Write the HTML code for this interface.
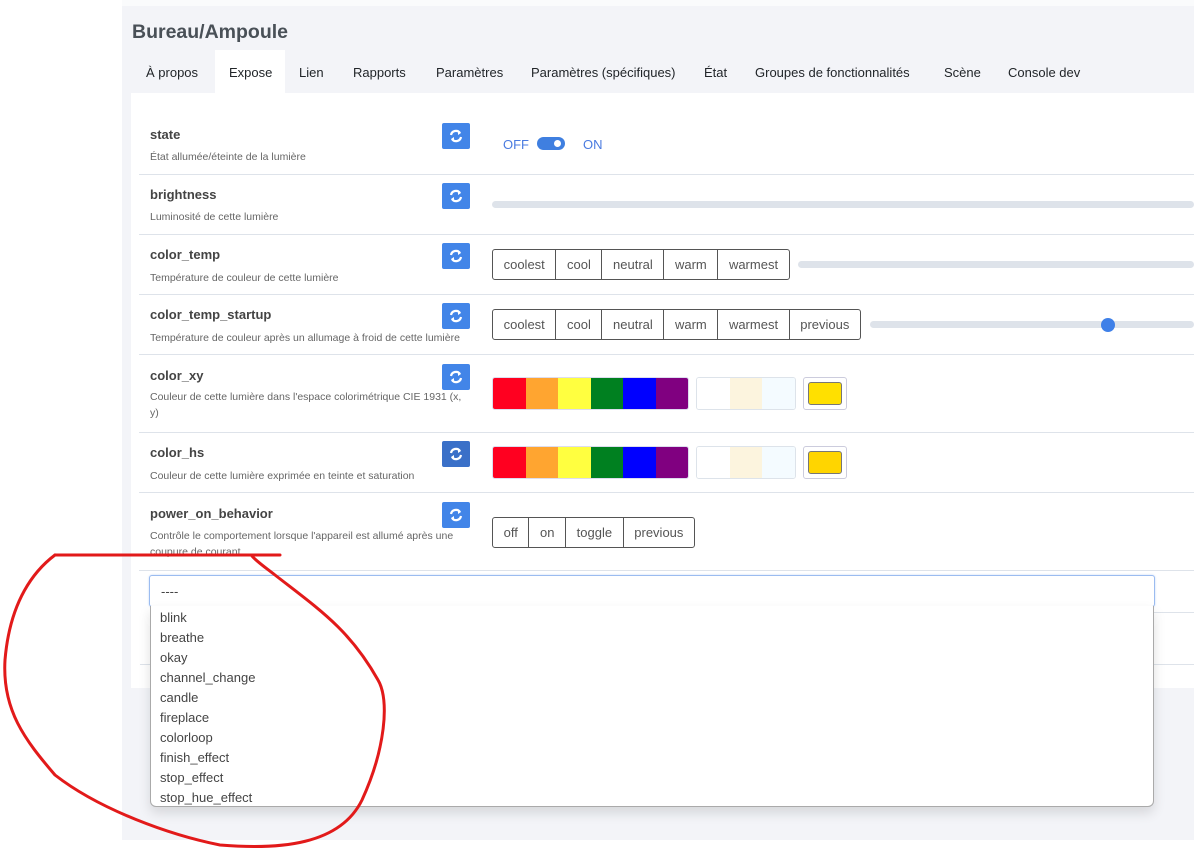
<!DOCTYPE html>
<html><head><meta charset="utf-8"><style>
*{box-sizing:border-box;margin:0;padding:0}
body{width:1194px;height:850px;background:#fff;font-family:"Liberation Sans",sans-serif;position:relative;overflow:hidden;color:#212529}
.a{position:absolute}
.panel{left:122px;top:0;width:1072px;height:840px;background:#f3f4f8}
.top{left:122px;top:0;width:1072px;height:6px;background:#fafbfc}
h1{position:absolute;left:132px;top:21px;font-size:19.5px;font-weight:bold;color:#495057}
.tab{position:absolute;top:65px;font-size:13px;color:#212529}
.active{left:215px;top:50px;width:70px;height:44px;background:#fff}
.card{left:131px;top:93px;width:1063px;height:595px;background:#fff}
.lbl{position:absolute;left:150px;font-size:13px;font-weight:bold;color:#444}
.desc{position:absolute;left:150px;font-size:10.5px;color:#666;width:322px;line-height:16px}
.sep{position:absolute;left:139px;width:1055px;height:1px;background:#dee3ea}
.rb{position:absolute;left:442px;width:28px;height:26px;background:#4285e8;border-radius:2px}
.rb svg{position:absolute;left:7px;top:6px}
.grp{position:absolute;display:flex;border:1px solid #555;border-radius:3px;height:31px}
.grp span{font-size:13px;color:#555;padding:0 10.6px;line-height:29px;border-left:1px solid #555}
.grp span:first-child{border-left:none}
.sl{position:absolute;height:7px;background:#dee3ea;border-radius:4px}
.rain{position:absolute;left:492px;width:197px;height:33px;display:flex;border:1px solid #dde;border-radius:3px;overflow:hidden}
.rain i{flex:1}
.wh{position:absolute;left:696px;width:100px;height:33px;display:flex;border:1px solid #dde3ea;border-radius:3px;overflow:hidden}
.wh i{flex:1}
.sw{position:absolute;left:803px;width:44px;height:33px;border:1px solid #ccd;border-radius:3px}
.sw i{position:absolute;left:4px;top:4px;width:34px;height:23px;border:1px solid #777;border-radius:3px}
.item{position:absolute;left:160px;font-size:13px;color:#444}
</style></head><body>
<div class="a panel"></div><div class="a top"></div>
<h1>Bureau/Ampoule</h1>
<div class="a active"></div>
<div class="tab" style="left:146px">À propos</div>
<div class="tab" style="left:229px">Expose</div>
<div class="tab" style="left:299px">Lien</div>
<div class="tab" style="left:353px">Rapports</div>
<div class="tab" style="left:436px">Paramètres</div>
<div class="tab" style="left:531px">Paramètres (spécifiques)</div>
<div class="tab" style="left:704px">État</div>
<div class="tab" style="left:755px">Groupes de fonctionnalités</div>
<div class="tab" style="left:944px">Scène</div>
<div class="tab" style="left:1008px">Console dev</div>
<div class="a card"></div>

<div class="lbl" style="top:127px">state</div><div class="desc" style="top:149px">État allumée/éteinte de la lumière</div>
<div class="sep" style="top:174px"></div>
<div class="lbl" style="top:187px">brightness</div><div class="desc" style="top:209px">Luminosité de cette lumière</div>
<div class="sep" style="top:234px"></div>
<div class="lbl" style="top:247px">color_temp</div><div class="desc" style="top:270px">Température de couleur de cette lumière</div>
<div class="sep" style="top:294px"></div>
<div class="lbl" style="top:307px">color_temp_startup</div><div class="desc" style="top:330px">Température de couleur après un allumage à froid de cette lumière</div>
<div class="sep" style="top:354px"></div>
<div class="lbl" style="top:368px">color_xy</div><div class="desc" style="top:389px;width:318px">Couleur de cette lumière dans l'espace colorimétrique CIE 1931 (x, y)</div>
<div class="sep" style="top:432px"></div>
<div class="lbl" style="top:445px">color_hs</div><div class="desc" style="top:468px">Couleur de cette lumière exprimée en teinte et saturation</div>
<div class="sep" style="top:492px"></div>
<div class="lbl" style="top:506px">power_on_behavior</div><div class="desc" style="top:528px">Contrôle le comportement lorsque l'appareil est allumé après une coupure de courant</div>
<div class="sep" style="top:570px"></div>
<div class="sep" style="top:612px;left:150px;width:1044px"></div>
<div class="sep" style="top:664px;left:140px"></div>

<div class="rb" style="top:123px"><svg width="14" height="14" viewBox="0 0 14 14"><path d="M2 6a5 5 0 0 1 9-2M12 8a5 5 0 0 1-9 2" stroke="#fff" stroke-width="2.2" fill="none"/><path d="M9 1l3 3-3 2zM5 13l-3-3 3-2z" fill="#fff"/></svg></div>
<div class="rb" style="top:183px"><svg width="14" height="14" viewBox="0 0 14 14"><path d="M2 6a5 5 0 0 1 9-2M12 8a5 5 0 0 1-9 2" stroke="#fff" stroke-width="2.2" fill="none"/><path d="M9 1l3 3-3 2zM5 13l-3-3 3-2z" fill="#fff"/></svg></div>
<div class="rb" style="top:243px"><svg width="14" height="14" viewBox="0 0 14 14"><path d="M2 6a5 5 0 0 1 9-2M12 8a5 5 0 0 1-9 2" stroke="#fff" stroke-width="2.2" fill="none"/><path d="M9 1l3 3-3 2zM5 13l-3-3 3-2z" fill="#fff"/></svg></div>
<div class="rb" style="top:303px"><svg width="14" height="14" viewBox="0 0 14 14"><path d="M2 6a5 5 0 0 1 9-2M12 8a5 5 0 0 1-9 2" stroke="#fff" stroke-width="2.2" fill="none"/><path d="M9 1l3 3-3 2zM5 13l-3-3 3-2z" fill="#fff"/></svg></div>
<div class="rb" style="top:364px"><svg width="14" height="14" viewBox="0 0 14 14"><path d="M2 6a5 5 0 0 1 9-2M12 8a5 5 0 0 1-9 2" stroke="#fff" stroke-width="2.2" fill="none"/><path d="M9 1l3 3-3 2zM5 13l-3-3 3-2z" fill="#fff"/></svg></div>
<div class="rb" style="top:441px;background:#3a70c8"><svg width="14" height="14" viewBox="0 0 14 14"><path d="M2 6a5 5 0 0 1 9-2M12 8a5 5 0 0 1-9 2" stroke="#fff" stroke-width="2.2" fill="none"/><path d="M9 1l3 3-3 2zM5 13l-3-3 3-2z" fill="#fff"/></svg></div>
<div class="rb" style="top:502px"><svg width="14" height="14" viewBox="0 0 14 14"><path d="M2 6a5 5 0 0 1 9-2M12 8a5 5 0 0 1-9 2" stroke="#fff" stroke-width="2.2" fill="none"/><path d="M9 1l3 3-3 2zM5 13l-3-3 3-2z" fill="#fff"/></svg></div>

<div class="a" style="left:503px;top:137px;font-size:13px;color:#4a7be0">OFF</div>
<div class="a" style="left:537px;top:137px;width:28px;height:13px;background:#3f7fe0;border-radius:7px"><div class="a" style="left:17px;top:3px;width:7px;height:7px;background:#fff;border-radius:50%"></div></div>
<div class="a" style="left:583px;top:137px;font-size:13px;color:#4a7be0">ON</div>

<div class="sl" style="left:492px;top:201px;width:702px"></div>
<div class="grp" style="left:492px;top:249px"><span>coolest</span><span>cool</span><span>neutral</span><span>warm</span><span>warmest</span></div>
<div class="sl" style="left:798px;top:261px;width:396px"></div>
<div class="grp" style="left:492px;top:309px"><span>coolest</span><span>cool</span><span>neutral</span><span>warm</span><span>warmest</span><span>previous</span></div>
<div class="sl" style="left:870px;top:321px;width:324px"></div>
<div class="a" style="left:1101px;top:318px;width:14px;height:14px;background:#3f80e8;border-radius:50%"></div>

<div class="rain" style="top:377px"><i style="background:#ff0020"></i><i style="background:#ffa530"></i><i style="background:#ffff40"></i><i style="background:#008020"></i><i style="background:#0000ff"></i><i style="background:#800080"></i></div>
<div class="wh" style="top:377px"><i style="background:#fff"></i><i style="background:#fcf4de"></i><i style="background:#f4fbff"></i></div>
<div class="sw" style="top:377px"><i style="background:#ffe000"></i></div>
<div class="rain" style="top:446px"><i style="background:#ff0020"></i><i style="background:#ffa530"></i><i style="background:#ffff40"></i><i style="background:#008020"></i><i style="background:#0000ff"></i><i style="background:#800080"></i></div>
<div class="wh" style="top:446px"><i style="background:#fff"></i><i style="background:#fcf4de"></i><i style="background:#f4fbff"></i></div>
<div class="sw" style="top:446px"><i style="background:#ffd500"></i></div>

<div class="grp" style="left:492px;top:517px"><span>off</span><span>on</span><span>toggle</span><span>previous</span></div>

<div class="a" style="left:149px;top:575px;width:1006px;height:32px;border:1px solid #9bbcf0;border-radius:3px;background:#fff;box-shadow:0 0 2px #c5d8f7"><div class="a" style="left:11px;top:8px;font-size:13px;color:#444">----</div></div>
<div class="a" style="left:150px;top:606px;width:1004px;height:201px;background:#fff;border:1px solid #aaa;border-top:none;border-radius:0 0 6px 6px;box-shadow:0 6px 12px rgba(0,0,0,.12)"></div>
<div class="item" style="top:610px">blink</div>
<div class="item" style="top:630px">breathe</div>
<div class="item" style="top:650px">okay</div>
<div class="item" style="top:670px">channel_change</div>
<div class="item" style="top:690px">candle</div>
<div class="item" style="top:710px">fireplace</div>
<div class="item" style="top:730px">colorloop</div>
<div class="item" style="top:750px">finish_effect</div>
<div class="item" style="top:770px">stop_effect</div>
<div class="item" style="top:790px">stop_hue_effect</div>

<svg class="a" style="left:0;top:0" width="1194" height="850"><g fill="none" stroke="#e21a1a" stroke-width="3" stroke-linecap="round"><path d="M55 555 L280 555"/><path d="M55 555 C35 570 10 600 5 660 C2 710 25 740 55 775 C100 810 170 835 220 845 C280 850 340 845 362 800 C385 750 390 700 378 680 C350 630 320 610 275 575 C262 565 255 560 252 556"/></g></svg>
</body></html>
